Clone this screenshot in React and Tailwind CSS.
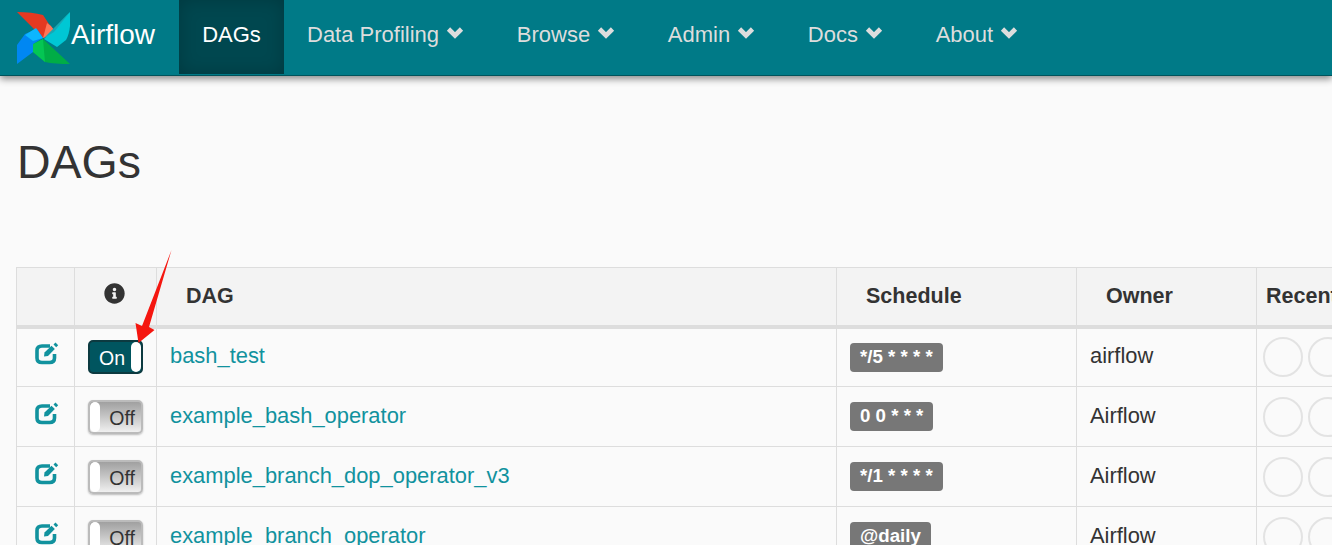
import React from 'react';
import { FaInfoCircle } from 'react-icons/fa';

const NAV = ['Data Profiling', 'Browse', 'Admin', 'Docs', 'About'];

const ROWS = [
  { name: 'bash_test', schedule: '*/5 * * * *', owner: 'airflow', on: true },
  { name: 'example_bash_operator', schedule: '0 0 * * *', owner: 'Airflow' },
  { name: 'example_branch_dop_operator_v3', schedule: '*/1 * * * *', owner: 'Airflow' },
  { name: 'example_branch_operator', schedule: '@daily', owner: 'Airflow' },
];

function Logo() {
  return (
    <svg width="54" height="54" viewBox="17 9 54 54" className="shrink-0">
      <path d="M17 10 Q32 10 43 13 L49 22 L54 28 L53 32 L43 36 Z" fill="#e43921" />
      <path d="M47 21 Q52 24 54 28 L53 32 L43 36 Z" fill="#ff7557" />
      <path d="M70 10 L70 24 Q69 33 66 38 L57 45 L44 37 Z" fill="#00c7d4" />
      <path d="M70 10 L54 30 L44 36 Z" fill="#17a8b5" />
      <path d="M70 62 Q55 62 45 60 L33 50 L33 42 L43 37 Z" fill="#00ad46" />
      <path d="M33 42 L43 37 L45 60 L33 50 Z" fill="#04c653" />
      <path d="M17 62 L17 43 L25 32 L37 27 L43 36 L33 42 L33 50 Z" fill="#0087f2" />
      <path d="M25 33 L36 26 L43 36 L33 39 Z" fill="#0cb6ff" />
    </svg>
  );
}

function Chevron() {
  return (
    <svg width="18" height="13" viewBox="0 0 18 13" fill="none" className="absolute top-[8px] right-[-25px]">
      <path d="M2.5 3 L9 9.5 L15.5 3" stroke="currentColor" strokeWidth="4.6" />
    </svg>
  );
}

function EditIcon() {
  return (
    <svg width="24" height="23" viewBox="0 0 24 23" fill="none">
      <path d="M15 4 H7 Q2 4 2 8.5 V16 Q2 20.5 7 20.5 H14.5 Q19.5 20.5 19.5 16 V12" stroke="#11929e" strokeWidth="3.6" />
      <path d="M9 14.5 L9.5 10.5 L16.5 3.8 L19.8 7 L13 14 Z" fill="#11929e" />
      <path d="M20.5 0.6 L23.2 3.2 L21.2 5.2 L18.5 2.6 Z" fill="#11929e" />
    </svg>
  );
}

function Toggle({ on }) {
  if (on) {
    return (
      <div className="flex h-[34px] w-[55px] items-center justify-between overflow-hidden rounded-[5px] border-2 border-[#0c3a40] bg-[#00555f]">
        <span className="pt-[2px] pl-[9px] text-[19.5px] text-white">On</span>
        <span className="h-full w-[10px] rounded-[5px] bg-white" />
      </div>
    );
  }
  return (
    <div className="flex h-[34px] w-[55px] items-center justify-between overflow-hidden rounded-[5px] border-2 border-[#bbbbbb] bg-gradient-to-b from-[#a0a0a0] to-[#f0f0f0] shadow-[0_1px_2px_rgba(0,0,0,0.25)]">
      <span className="h-full w-[10px] rounded-[5px] bg-white" />
      <span className="pt-[4px] pr-[6px] text-[19.5px] text-[#333333]">Off</span>
    </div>
  );
}

function Row({ row }) {
  return (
    <tr className="h-[60px] border-b border-[#dddddd]">
      <td className="border-r border-l border-[#dddddd] pb-[7px] pl-[18px] align-middle">
        <EditIcon />
      </td>
      <td className="border-r border-[#dddddd] pl-[13px] align-middle">
        <Toggle on={row.on} />
      </td>
      <td className="border-r border-[#dddddd] pb-[1px] pl-[13px] align-middle text-[21.9px] text-[#11929e]">{row.name}</td>
      <td className="border-r border-[#dddddd] pl-[13px] align-middle">
        <span className="inline-block h-[29px] rounded-[4px] bg-[#777777] px-[10px] text-[18.7px] leading-[27px] font-bold text-white">
          {row.schedule}
        </span>
      </td>
      <td className="border-r border-[#dddddd] pb-[1px] pl-[13px] align-middle text-[21.9px] text-[#333333]">{row.owner}</td>
      <td className="pl-[6px] align-middle">
        <div className="flex gap-[5px]">
          {[0, 1, 2].map(i => (
            <span key={i} className="h-[40px] w-[40px] shrink-0 rounded-full border-2 border-[#e3e3e3]" />
          ))}
        </div>
      </td>
    </tr>
  );
}

export default function App() {
  return (
    <div className="relative h-[545px] w-[1332px] overflow-hidden bg-[#fafafa] font-['Liberation_Sans',Arial,sans-serif] text-[#333333]">
      <nav className="flex h-[76px] items-stretch border-b border-[#00545c] bg-[#007a87] shadow-[0_3px_7px_rgba(0,0,0,0.45)]">
        <div className="flex w-[179px] items-center pl-[17px]">
          <Logo />
          <span className="pb-[6px] text-[28px] text-white">Airflow</span>
        </div>
        <div className="flex h-[74px] w-[105px] items-center justify-center bg-[#00474f] pb-[6px] text-[22px] text-white shadow-[inset_0_0_18px_rgba(0,0,0,0.2)]">
          DAGs
        </div>
        <div className="flex items-center gap-[77.7px] pb-[7px] pl-[23px] text-[22px] text-[#dddddd]">
          {NAV.map(label => (
            <span key={label} className="relative">
              {label}
              <Chevron />
            </span>
          ))}
        </div>
      </nav>

      <main className="pl-4">
        <h1 className="mt-[57px] mb-[76px] pl-px text-[46.5px] leading-[58px] font-normal">DAGs</h1>
        <table className="w-[1400px] table-fixed border-collapse">
          <colgroup>
            <col className="w-[58px]" />
            <col className="w-[82px]" />
            <col className="w-[680px]" />
            <col className="w-[240px]" />
            <col className="w-[180px]" />
            <col className="w-[160px]" />
          </colgroup>
          <thead>
            <tr className="h-[59px] border-t border-b-[4px] border-[#dddddd] bg-[#f3f3f3] text-left text-[21.5px] font-bold">
              <th className="border-r border-l border-[#dddddd]" />
              <th className="border-r border-[#dddddd] pb-[6px] pl-[29px]">
                <FaInfoCircle size={21} />
              </th>
              <th className="border-r border-[#dddddd] pl-[29px]">DAG</th>
              <th className="border-r border-[#dddddd] pl-[29px]">Schedule</th>
              <th className="border-r border-[#dddddd] pl-[29px]">Owner</th>
              <th className="pl-[9px]">Recent Tasks</th>
            </tr>
          </thead>
          <tbody>
            {ROWS.map(row => <Row key={row.name} row={row} />)}
          </tbody>
        </table>
      </main>

      {/* annotation arrow drawn over the screenshot */}
      <svg className="absolute top-[248px] left-[130px]" width="46" height="98" viewBox="130 248 46 98">
        <path d="M171.5 250 L149 327 L154.5 330 L138.5 343 L135.5 323 L142 326 Z" fill="#f5160f" />
      </svg>
    </div>
  );
}
